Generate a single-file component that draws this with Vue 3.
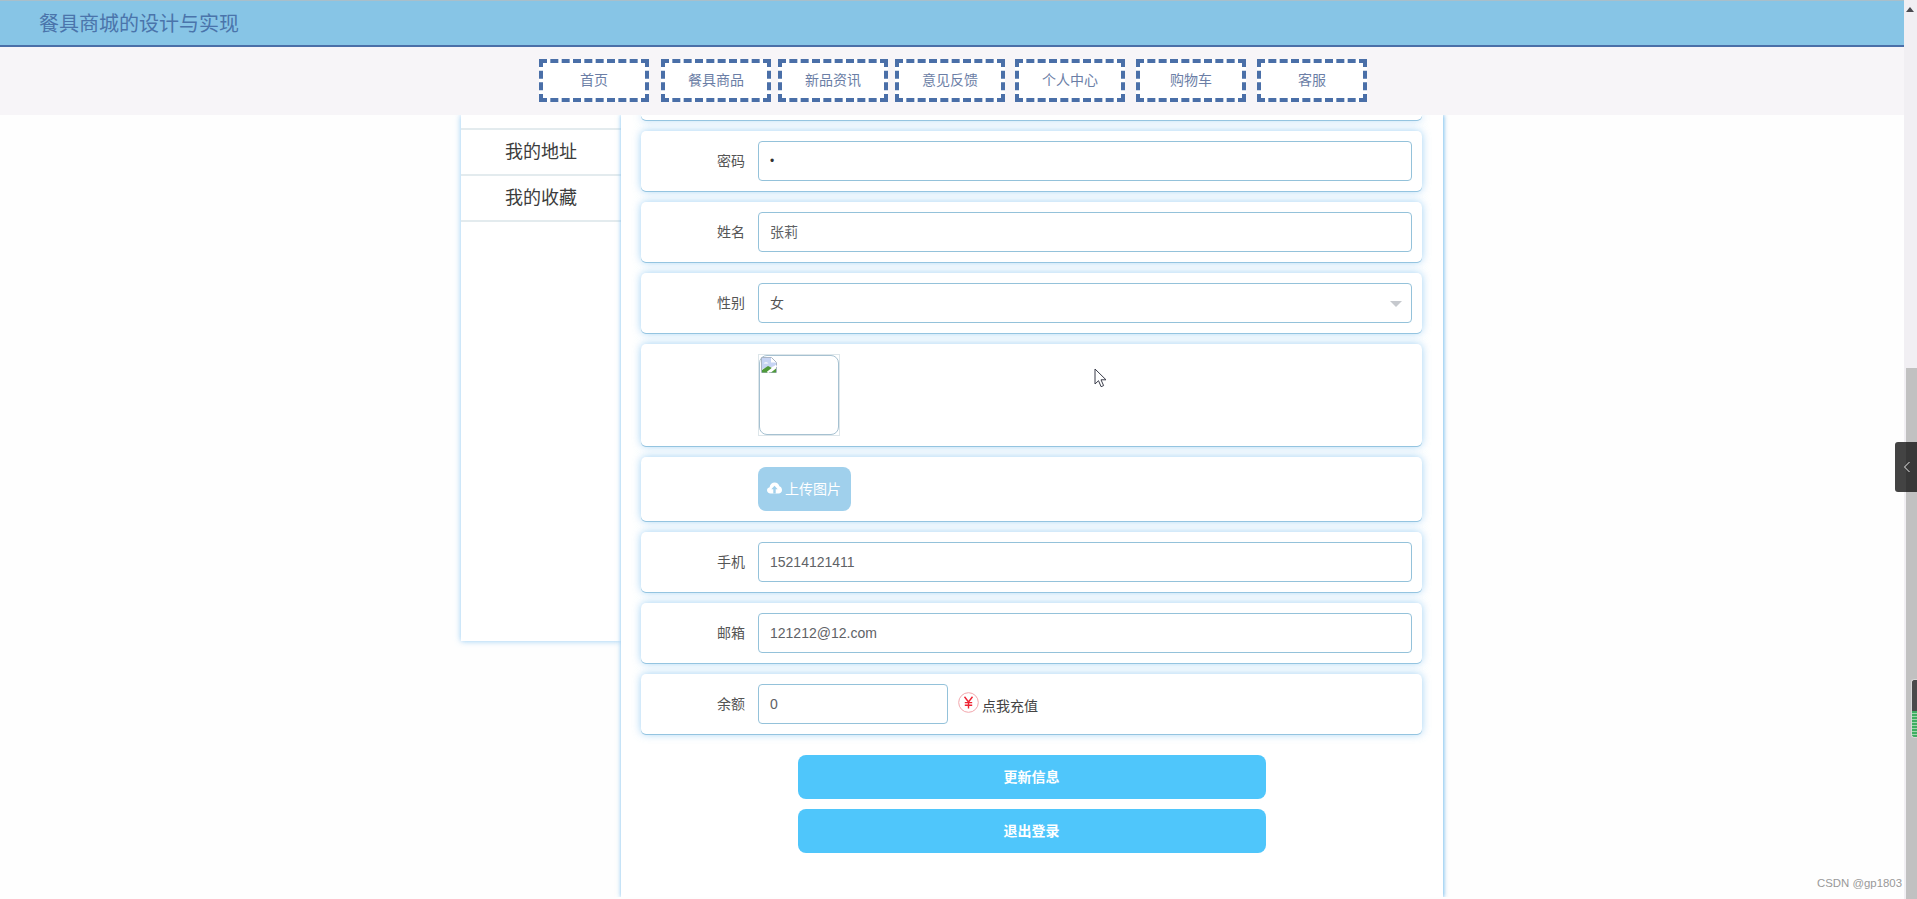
<script setup>
const navItems = [
  { label: '首页', gap: 0 },
  { label: '餐具商品', gap: 12 },
  { label: '新品资讯', gap: 7 },
  { label: '意见反馈', gap: 7 },
  { label: '个人中心', gap: 10 },
  { label: '购物车', gap: 11 },
  { label: '客服', gap: 11 },
]

const menuItems = ['我的地址', '我的收藏']
</script>

<template>
  <div class="screen">
    <div class="page">
      <header class="top-bar">
        <div class="site-title">餐具商城的设计与实现</div>
      </header>
      <nav class="nav-bar">
        <a
          v-for="item in navItems"
          :key="item.label"
          class="nav-item"
          :style="{ marginLeft: item.gap + 'px' }"
        >{{ item.label }}</a>
      </nav>

      <div class="content">
        <aside class="side-menu">
          <div class="side-stub"></div>
          <div v-for="item in menuItems" :key="item" class="side-row">{{ item }}</div>
        </aside>

        <main class="profile">
          <div class="form-card stub"></div>

          <div class="form-card">
            <label class="field-label">密码</label>
            <div class="field-input password">•</div>
          </div>
          <div class="form-card">
            <label class="field-label">姓名</label>
            <div class="field-input">张莉</div>
          </div>
          <div class="form-card">
            <label class="field-label">性别</label>
            <div class="field-input select">
              <span>女</span>
              <i class="select-arrow"></i>
            </div>
          </div>

          <div class="form-card avatar-card">
            <div class="field-label"></div>
            <div class="avatar-frame">
              <div class="avatar">
                <svg class="broken-img" width="16" height="16" viewBox="0 0 16 16">
                  <path d="M.5.5h10l5 5v10H.5z" fill="#fff" stroke="#a9b4c4" />
                  <path d="M1 1h9v4.5h5V9L1 12z" fill="#c6d4f4" />
                  <path d="M2.5 6.5c1.5-1.6 3.5-1.6 5 0z" fill="#fff" />
                  <path d="M1 15.500V13l6-4 4 2-3 4.500z" fill="#4f9a3a" />
                  <path d="M10 15.500l5-4v4z" fill="#4f9a3a" />
                  <path d="M6.500 15.500l9-7" stroke="#fff" stroke-width="2" />
                </svg>
              </div>
            </div>
          </div>

          <div class="form-card upload-card">
            <div class="field-label"></div>
            <button class="upload-btn" type="button">
              <svg width="15" height="12" viewBox="0 0 15 12">
                <path d="M3.500 11.500C1.500 11.500 0 10.100 0 8.300c0-1.600 1.100-2.800 2.600-3.100C3 2.600 5.100.5 7.700.5c2.300 0 4.200 1.600 4.700 3.700 1.500.4 2.600 1.900 2.600 3.700 0 2-1.500 3.600-3.400 3.600z" fill="#fff" />
                <path d="M7.500 3.800l3.200 3.500H8.700v4.200H6.300V7.300H4.300z" fill="#a0d0ec" />
              </svg>
              <span>上传图片</span>
            </button>
          </div>

          <div class="form-card">
            <label class="field-label">手机</label>
            <div class="field-input">15214121411</div>
          </div>
          <div class="form-card">
            <label class="field-label">邮箱</label>
            <div class="field-input">121212@12.com</div>
          </div>
          <div class="form-card">
            <label class="field-label">余额</label>
            <div class="field-input balance">0</div>
            <div class="recharge">
              <svg class="yen" width="21" height="21" viewBox="0 0 21 21">
                <circle cx="10.500" cy="10.500" r="9.800" fill="#fff" stroke="#f2a6ac" />
                <path d="M6.500 4.800l4 5.200 4-5.200M10.500 10v6.500M6.800 10.600h7.400M6.800 13.300h7.400" fill="none" stroke="#ee2333" stroke-width="1.400" />
              </svg>
              <span>点我充值</span>
            </div>
          </div>

          <div class="actions">
            <button class="action-btn" type="button">更新信息</button>
            <button class="action-btn" type="button">退出登录</button>
          </div>
        </main>
      </div>
    </div>

    <div class="scrollbar">
      <i class="scroll-up"></i>
      <div class="scroll-thumb"></div>
    </div>

    <div class="side-tab">
      <svg width="8" height="12" viewBox="0 0 8 12">
        <path d="M6.500 1L1.500 6l5 5" fill="none" stroke="#e8e8e8" stroke-width="1" />
      </svg>
    </div>
    <div class="meter"></div>
    <div class="watermark">CSDN @gp1803</div>

    <svg class="cursor" width="13" height="20" viewBox="0 0 13 20">
      <path d="M1 1v15l3.500-3.300 2.600 6 2.500-1.100-2.600-5.800H12z" fill="#fff" stroke="#3a3d4a" stroke-width="1" stroke-linejoin="round" />
    </svg>
  </div>
</template>

<style>
html,
body {
  margin: 0;
  height: 899px;
  overflow: hidden;
  background: #fefefe;
}
</style>

<style scoped>
.screen {
  position: relative;
  display: flex;
  width: 1917px;
  height: 899px;
  overflow: hidden;
  font-family: "Liberation Sans", "Noto Sans CJK SC", sans-serif;
  font-size: 14px;
  color: #606266;
  background: #fefefe;
}

.page {
  display: flex;
  flex-direction: column;
  width: 1904px;
  height: 897px;
}

.top-bar {
  box-sizing: border-box;
  flex: none;
  height: 47px;
  padding: 1px 0 0 39px;
  background: #87c5e6;
  border-top: 1px solid #a9bfca;
  border-bottom: 2px solid #4a6fa8;
}

.site-title {
  font-size: 20px;
  line-height: 44px;
  color: #4a74ab;
}

.nav-bar {
  box-sizing: border-box;
  flex: none;
  display: flex;
  height: 68px;
  padding: 12px 0 0 539px;
  background: #f7f5f8;
}

.nav-item {
  box-sizing: border-box;
  width: 110px;
  height: 43px;
  line-height: 35px;
  text-align: center;
  color: #6b7ea6;
  background: #fff;
  border: 4px dashed #4a6fa8;
}

.content {
  flex: 1;
  display: flex;
  justify-content: center;
  align-items: flex-start;
  min-height: 0;
  overflow: hidden;
}

.side-menu {
  width: 160px;
  height: 526px;
  background: #fff;
  box-shadow: 0 0 6px rgba(110, 185, 240, 0.75);
}

.side-stub {
  box-sizing: border-box;
  height: 15px;
  border-bottom: 2px solid #e3ebee;
}

.side-row {
  box-sizing: border-box;
  height: 46px;
  line-height: 44px;
  font-size: 18px;
  text-align: center;
  color: #3c3c3c;
  border-bottom: 2px solid #e3ebee;
}

.profile {
  position: relative;
  box-sizing: border-box;
  display: flex;
  flex-direction: column;
  gap: 11px;
  width: 822px;
  height: 782px;
  padding: 0 21px 0 20px;
  background: #fff;
  box-shadow: 1px 0 4px rgba(100, 180, 235, 0.8), -1px 0 4px rgba(150, 205, 245, 0.5);
}

.form-card {
  box-sizing: border-box;
  flex: none;
  display: flex;
  align-items: center;
  height: 60px;
  padding-right: 10px;
  background: #fff;
  border-radius: 5px;
  box-shadow: 0 1px 0 #94c4e0, 0 0 8px rgba(120, 190, 240, 0.7);
}

.form-card.stub {
  height: 5px;
  border-radius: 0 0 5px 5px;
}

.avatar-card {
  height: 102px;
}

.upload-card {
  height: 64px;
}

.field-label {
  flex: none;
  width: 104px;
  margin: 0 13px 2px 0;
  text-align: right;
  color: #555;
}

.field-input {
  box-sizing: border-box;
  flex: 1;
  height: 40px;
  padding: 0 11px;
  line-height: 38px;
  color: #606266;
  background: #fff;
  border: 1px solid #94c2da;
  border-radius: 4px;
}

.password {
  color: #333;
  font-size: 12px;
}

.select {
  display: flex;
  align-items: center;
  justify-content: space-between;
  padding-right: 9px;
  color: #555;
}

.select-arrow {
  display: block;
  margin-top: 1px;
  border-top: 6px solid #c6c9ce;
  border-left: 6px solid transparent;
  border-right: 6px solid transparent;
}

.avatar-frame {
  width: 82px;
  height: 82px;
  box-sizing: border-box;
  border: 1px solid #dde6ea;
}

.avatar {
  box-sizing: border-box;
  width: 80px;
  height: 80px;
  padding: 1px 0 0 1px;
  background: #fff;
  border: 1px solid #a6c1d1;
  border-radius: 8px;
}

.broken-img {
  display: block;
}

.upload-btn {
  display: flex;
  align-items: center;
  gap: 3px;
  box-sizing: border-box;
  width: 93px;
  height: 44px;
  padding: 0 0 2px 9px;
  font-family: inherit;
  font-size: 14px;
  color: #fff;
  background: #a0d0ec;
  border: none;
  border-radius: 8px;
}

.balance {
  flex: none;
  width: 190px;
}

.recharge {
  display: flex;
  align-items: center;
  gap: 3px;
  margin-left: 10px;
  color: #444;
}

.recharge span {
  margin-top: 1px;
}

.yen {
  margin-bottom: 3px;
}

.actions {
  display: flex;
  flex-direction: column;
  align-items: center;
  gap: 10px;
  margin-top: 10px;
}

.action-btn {
  width: 468px;
  height: 44px;
  padding: 0 0 2px;
  font-family: inherit;
  font-size: 14px;
  font-weight: 600;
  color: #fff;
  background: #4fc6fb;
  border: none;
  border-radius: 8px;
}

.scrollbar {
  flex: none;
  display: flex;
  flex-direction: column;
  width: 13px;
  height: 899px;
  background: #f1eff3;
}

.scroll-up {
  display: block;
  height: 0;
  width: 0;
  margin: 7px 0 0 2px;
  border-bottom: 5px solid #4a4a50;
  border-left: 4px solid transparent;
  border-right: 4px solid transparent;
}

.scroll-thumb {
  flex: 1;
  margin: 356px 0 0 2px;
  background: #c1c1c1;
}

.side-tab {
  position: absolute;
  top: 442px;
  right: 0;
  display: flex;
  align-items: center;
  box-sizing: border-box;
  width: 22px;
  height: 50px;
  padding-left: 8px;
  background: linear-gradient(to right, #434343 11px, #383838 11px);
  border-radius: 3px 0 0 3px;
}

.meter {
  position: absolute;
  top: 679px;
  right: 0;
  box-sizing: border-box;
  width: 6px;
  height: 59px;
  background:
    repeating-linear-gradient(to bottom, #3fae62 0 2px, #9fd8ae 2px 3px) left bottom / 100% 26px no-repeat,
    #4a4a4a;
  border: 1px solid #d8d8d8;
  border-right: none;
  border-radius: 3px 0 0 3px;
}

.watermark {
  position: absolute;
  right: 15px;
  bottom: 9px;
  font-size: 11.4px;
  line-height: 14px;
  color: #999;
}

.cursor {
  position: absolute;
  left: 1094px;
  top: 368px;
}
</style>
